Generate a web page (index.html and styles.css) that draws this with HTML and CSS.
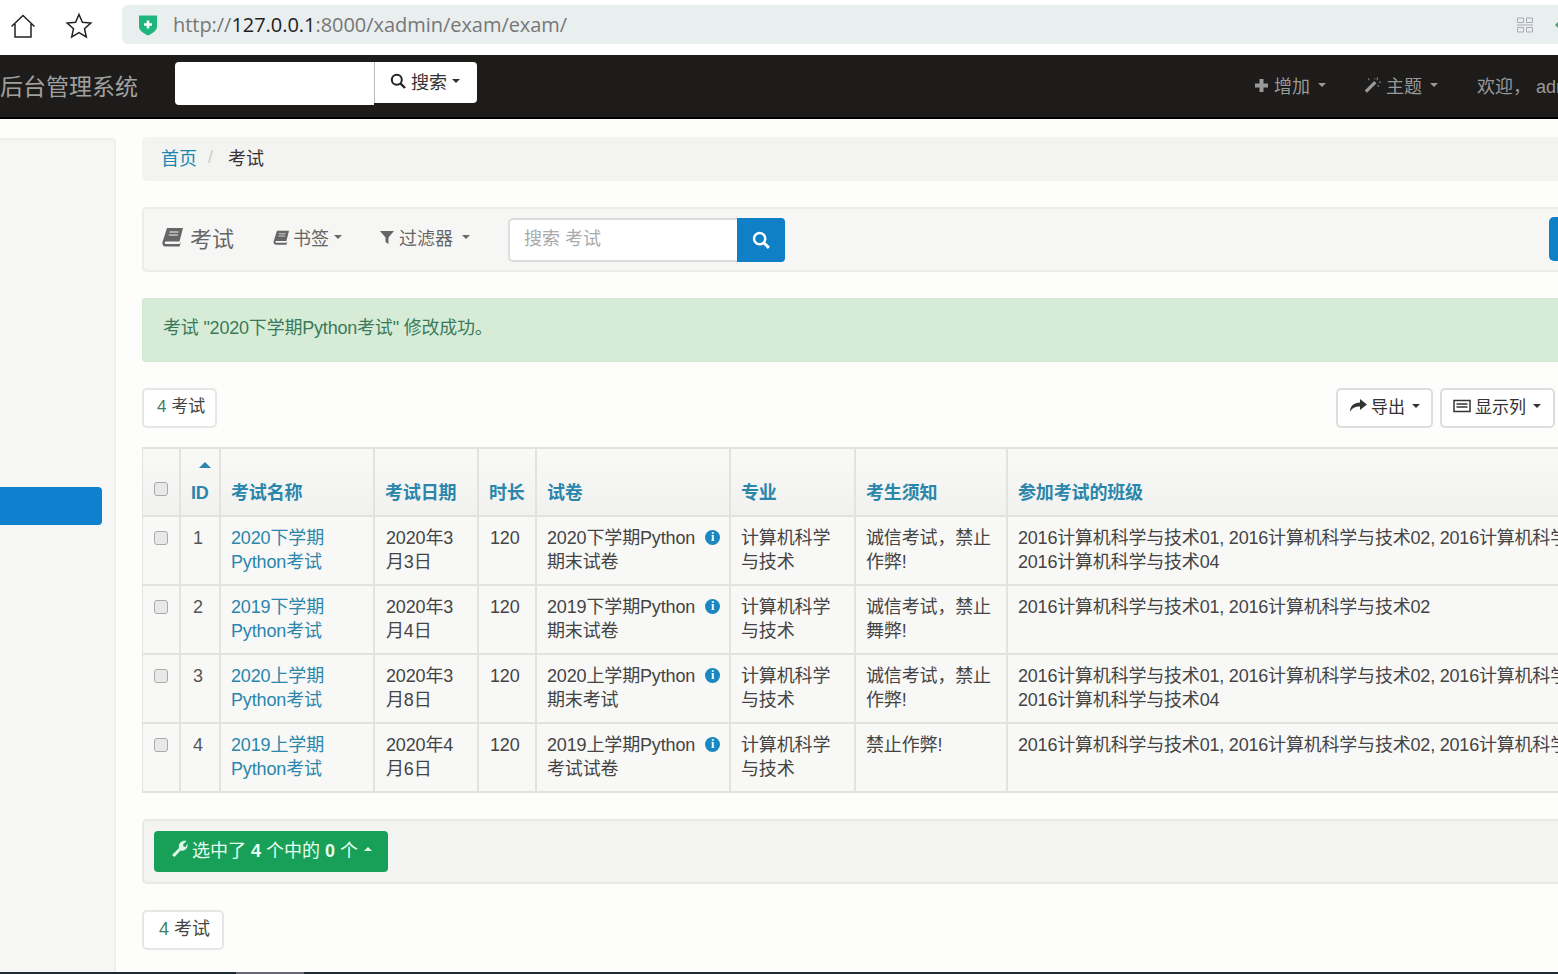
FILE: index.html
```html
<!DOCTYPE html>
<html lang="zh">
<head>
<meta charset="utf-8">
<title>考试</title>
<link rel="stylesheet" href="styles.css">
</head>
<body>
<div class="browser">
  <svg class="bicon" width="28" height="28" viewBox="0 0 28 28"><path d="M2.5 14.5 14 3.5l11.500 11M6 12v13h16V12" fill="none" stroke="#222" stroke-width="1.500"/></svg>
  <svg class="bicon star" width="28" height="28" viewBox="0 0 28 28"><path d="M14 2.500l3.400 7.800 8.400.8-6.300 5.600 1.800 8.300-7.300-4.300-7.300 4.300 1.800-8.300-6.300-5.600 8.400-.8z" fill="none" stroke="#222" stroke-width="1.500"/></svg>
  <div class="urlbar">
    <svg class="shield" width="20" height="24" viewBox="0 0 20 24"><path d="M1 2.500h18v11c0 4-4.500 7-9 9-4.500-2-9-5-9-9z" fill="#1fb57f"/><path d="M10 7.500v8M6 11.500h8" stroke="#fff" stroke-width="2.600"/></svg>
    <span class="url">http://<b>127.0.0.1</b>:8000/xadmin/exam/exam/</span>
    <svg class="qr" width="16" height="16" viewBox="0 0 16 16"><path d="M.5 1h6v4.500h-6zM9.500 1h6v4.500h-6zM.5 10.500h6V15h-6zM9.500 10.500h6V15h-6z" fill="none" stroke="#aab" stroke-width="1"/><path d="M0 8h16" stroke="#aab"/></svg>
    <svg class="edge" width="3" height="8" viewBox="0 0 3 8"><path d="M0 4 3 1v6z" fill="#5b9a80"/></svg>
  </div>
</div>
<header class="navbar">
  <span class="brand">后台管理系统</span>
  <div class="navsearch">
    <div class="navinput"></div>
    <button class="navbtn"><svg width="16" height="16" viewBox="0 0 16 16"><circle cx="6.800" cy="6.800" r="5" fill="none" stroke="#222" stroke-width="2"/><path d="M10.500 10.500 15 15" stroke="#222" stroke-width="2.400"/></svg><span class="navbtntext">搜索</span><i class="caret dark"></i></button>
  </div>
  <nav class="navright">
    <span class="navitem"><svg width="15" height="15" viewBox="0 0 15 15"><path d="M7.500 1v13M1 7.500h13" stroke="#999" stroke-width="4"/></svg>增加<i class="caret"></i></span>
    <span class="navitem"><svg width="17" height="18" viewBox="0 0 18 18"><path d="M2 16 12 6" stroke="#999" stroke-width="3.500"/><path d="M14 1v3M11 2l1 1M16 6h2M5 2v2M15 9v2" stroke="#999"/></svg>主题<i class="caret"></i></span>
    <span class="navitem welcome">欢迎， admin</span>
  </nav>
</header>
<div class="layout">
  <aside class="sidebar"><div class="sideactive"></div></aside>
  <main class="content">
    <div class="crumb"><a>首页</a><span class="sep">/</span><span>考试</span></div>
    <div class="toolbar">
      <span class="tooltitle"><svg width="22" height="20" viewBox="0 0 22 20"><path d="M5 1h16l-3.500 13.500H4C2.500 14.500 2.300 17 4 17h13.500l1.500-2-1.500 4.500H3.500C1 19.500 0 17.500.5 15z" fill="#666"/><path d="M7.500 5h9M6.800 8h9" stroke="#f6f6f5" stroke-width="1"/></svg>考试</span>
      <span class="toolitem"><svg width="17" height="15" viewBox="0 0 22 20"><path d="M5 1h16l-3.500 13.500H4C2.500 14.500 2.300 17 4 17h13.500l1.500-2-1.500 4.500H3.500C1 19.500 0 17.500.5 15z" fill="#666"/><path d="M7.500 5h9M6.800 8h9" stroke="#f6f6f5" stroke-width="1"/></svg>书签<i class="caret gray"></i></span>
      <span class="toolitem"><svg width="14" height="14" viewBox="0 0 14 14"><path d="M0 1h14L8.500 7.500V14l-3-2V7.500z" fill="#666"/></svg><span class="filtertext">过滤器</span><i class="caret gray wide"></i></span>
      <div class="searchbox"><span class="searchinput">搜索 考试</span><button class="searchbtn"><svg width="18" height="18" viewBox="0 0 16 16"><circle cx="6.800" cy="6.800" r="5" fill="none" stroke="#fff" stroke-width="2.200"/><path d="M10.500 10.500 15 15" stroke="#fff" stroke-width="2.600"/></svg></button></div>
      <span class="addbtn"></span>
    </div>
    <div class="alert">考试 "2020下学期Python考试" 修改成功。</div>
    <div class="countrow">
      <span class="count"><em>4</em> 考试</span>
      <div class="actions">
        <button class="tbtn"><svg width="18" height="14" viewBox="0 0 18 14"><path d="M11 0l7 5.500L11 11V7.500C6 7.500 3 9 1 13 1 7 5 3.500 11 3.500z" fill="#333"/></svg>导出<i class="caret dark"></i></button>
        <button class="tbtn"><svg width="18" height="14" viewBox="0 0 18 14"><path d="M1 1.500h16v11H1zM3.500 5h11M3.500 8h11" fill="none" stroke="#333" stroke-width="1.500"/></svg>显示列<i class="caret dark"></i></button>
      </div>
    </div>
    <div class="tablewrap">
    <table class="grid">
      <colgroup><col class="c1"><col class="c2"><col class="c3"><col class="c4"><col class="c5"><col class="c6"><col class="c7"><col class="c8"><col class="c9"></colgroup>
      <thead><tr>
        <th><span class="cb"></span></th>
        <th class="idh"><i class="sortup"></i><a>ID</a></th>
        <th><a>考试名称</a></th><th><a>考试日期</a></th><th><a>时长</a></th><th><a>试卷</a></th><th><a>专业</a></th><th><a>考生须知</a></th><th><a>参加考试的班级</a></th>
      </tr></thead>
      <tbody>
        <tr><td><span class="cb"></span></td><td class="idc">1</td><td><a>2020下学期Python考试</a></td><td class="num">2020年3月3日</td><td class="num">120</td><td class="paper"><span>2020下学期Python期末试卷</span><i class="info">i</i></td><td>计算机科学与技术</td><td>诚信考试，禁止作弊!</td><td class="cls"><div>2016计算机科学与技术01, 2016计算机科学与技术02, 2016计算机科学与技术03,</div><div>2016计算机科学与技术04</div></td></tr>
        <tr><td><span class="cb"></span></td><td class="idc">2</td><td><a>2019下学期Python考试</a></td><td class="num">2020年3月4日</td><td class="num">120</td><td class="paper"><span>2019下学期Python期末试卷</span><i class="info">i</i></td><td>计算机科学与技术</td><td>诚信考试，禁止舞弊!</td><td class="cls"><div>2016计算机科学与技术01, 2016计算机科学与技术02</div></td></tr>
        <tr><td><span class="cb"></span></td><td class="idc">3</td><td><a>2020上学期Python考试</a></td><td class="num">2020年3月8日</td><td class="num">120</td><td class="paper"><span>2020上学期Python期末考试</span><i class="info">i</i></td><td>计算机科学与技术</td><td>诚信考试，禁止作弊!</td><td class="cls"><div>2016计算机科学与技术01, 2016计算机科学与技术02, 2016计算机科学与技术03,</div><div>2016计算机科学与技术04</div></td></tr>
        <tr><td><span class="cb"></span></td><td class="idc">4</td><td><a>2019上学期Python考试</a></td><td class="num">2020年4月6日</td><td class="num">120</td><td class="paper"><span>2019上学期Python考试试卷</span><i class="info">i</i></td><td>计算机科学与技术</td><td>禁止作弊!</td><td class="cls"><div>2016计算机科学与技术01, 2016计算机科学与技术02, 2016计算机科学与技术03</div></td></tr>
      </tbody>
    </table>
    </div>
    <div class="actionbar"><button class="selbtn"><svg width="17" height="17" viewBox="0 0 17 17"><path d="M1 15l7-7C7 4 10.500 0 15.500 1L12 4.500l.5 2 2 .5L16.500 3.500c1 4.500-3 8-7 7L3.500 17z" fill="#dff5e8"/></svg><span>选中了 <b>4</b> 个中的 <b>0</b> 个</span><i class="caret up"></i></button></div>
    <span class="count bottom"><em>4</em> 考试</span>
  </main>
</div>
<div class="taskbar"><span class="thumb"></span></div>
</body>
</html>
```
FILE: styles.css
```css
* { box-sizing: border-box; }
html, body { margin: 0; height: 974px; overflow: hidden; }
body { width: 1558px; background: #fdfdfc; font-family: "Liberation Sans", "Noto Sans CJK SC", sans-serif; font-size: 18px; color: #444; display: flex; flex-direction: column; position: relative; }
button { font: inherit; }
a { color: #2a86ab; text-decoration: none; }
.browser { height: 55px; background: #fff; display: flex; align-items: flex-start; flex: none; padding: 5px 0 0 9px; }
.bicon { margin-top: 7px; flex: none; }
.star { margin-left: 28px; }
.urlbar { margin-left: 29px; flex: 1; height: 39px; background: #e9eeef; border-radius: 6px 0 0 6px; display: flex; align-items: center; padding-left: 16px; }
.shield { flex: none; }
.url { margin-left: 15px; font-family: "Open Sans", "Liberation Sans", sans-serif; font-size: 20px; color: #777; flex: 1; white-space: nowrap; letter-spacing: -0.04px; }
.url b { color: #222; font-weight: 400; }
.qr { margin-right: 22px; }
.edge { flex: none; }
.navbar { height: 64px; flex: none; background: #1d1c1b; border-bottom: 2px solid #000; display: flex; align-items: flex-start; color: #999; overflow: hidden; position: relative; }
.brand { font-size: 23px; margin-top: 13px; width: 175px; white-space: nowrap; color: #a0a0a0; }
.navsearch { display: flex; margin-top: 7px; height: 43px; }
.navinput { width: 199px; height: 43px; background: #fff; border-radius: 4px 0 0 4px; }
.navbtn { width: 103px; height: 41px; background: #fff; border: 0; border-left: 1px solid #bbb; border-radius: 0 4px 4px 0; color: #333; display: flex; align-items: center; justify-content: flex-start; padding: 0 0 3px 15px; }
.navbtntext { margin-left: 5px; }
.navright { margin-left: auto; display: flex; margin-top: 18px; white-space: nowrap; width: 304px; }
.navitem { display: inline-flex; align-items: center; gap: 5px; height: 24px; margin-right: 38px; }
.navitem:nth-child(2) { margin-right: 39px; }
.welcome { margin-right: -60px; white-space: pre; }
.caret { display: inline-block; width: 0; height: 0; border-left: 4.500px solid transparent; border-right: 4.500px solid transparent; border-top: 4.500px solid #999; margin-left: 5px; }
.navitem .caret { margin-left: 3px; }
.caret.dark { border-top-color: #333; }
.caret.gray { border-top-color: #666; margin-left: 2px; }
.caret.wide { margin-left: 6px; }
.caret.up { border-top: 0; border-bottom: 4px solid #eafff2; margin-left: 2px; }
.layout { flex: 1; display: flex; min-height: 0; padding-top: 18px; }
.sidebar { width: 116px; flex: none; background: #f6f6f5; border: 2px solid #eeeeec; border-left: 0; border-bottom: 0; border-radius: 0 4px 0 0; padding-top: 347px; margin-top: 1px; }
.sideactive { width: 102px; height: 38px; background: #0f7fd0; border-radius: 0 4px 4px 0; }
.content { margin-left: 26px; flex: 1; min-width: 0; overflow: hidden; }
.crumb { height: 44px; background: #f3f3f2; border-radius: 5px 0 0 5px; display: flex; align-items: center; padding: 0 0 4px 19px; font-size: 18px; color: #333; }
.crumb a { color: #1a87ae; }
.sep { color: #ccc; margin: 0 15px 0 11px; }
.toolbar { margin-top: 26px; height: 65px; background: #f6f6f5; border: 2px solid #ececea; border-right: 0; border-radius: 5px 0 0 5px; display: flex; align-items: center; padding-left: 18px; color: #666; position: relative; }
.tooltitle { display: inline-flex; align-items: center; gap: 6px; font-size: 22px; width: 111px; flex: none; padding-bottom: 5px; }
.toolitem { display: inline-flex; align-items: center; gap: 3px; flex: none; padding-bottom: 5px; }
.toolitem:nth-child(2) { width: 107px; }
.toolitem:nth-child(3) { width: 128px; }
.filtertext { margin-left: 2px; }
.searchbox { display: flex; height: 44px; }
.searchinput { width: 229px; height: 44px; border: 2px solid #ddd; border-right: 0; border-radius: 5px 0 0 5px; background: #fff; color: #aaa; padding-left: 14px; line-height: 38px; }
.searchbtn { width: 48px; height: 44px; background: #0f7fc6; border: 0; border-radius: 0 4px 4px 0; padding: 0; display: flex; align-items: center; justify-content: center; }
.addbtn { position: absolute; left: 1405px; top: 8px; width: 20px; height: 44px; background: #0f7fc6; border-radius: 5px 0 0 5px; }
.alert { margin-top: 26px; height: 64px; background: #d7ecd7; border: 1px solid #cfe6cf; border-right: 0; border-radius: 4px 0 0 4px; color: #3a7a5a; padding-left: 20px; line-height: 58px; white-space: nowrap; letter-spacing: -0.2px; }
.countrow { margin-top: 26px; display: flex; justify-content: space-between; height: 40px; padding-right: 3px; }
.count { display: inline-block; height: 40px; padding: 0 10px 0 13px; line-height: 33px; border: 2px solid #e6e6e4; border-radius: 5px; background: #fff; color: #444; font-size: 17px; }
.count em { font-style: normal; color: #3f7f60; }
.actions { display: flex; gap: 7px; }
.tbtn { height: 40px; width: 97px; background: #fff; border: 2px solid #ddd; border-radius: 5px; color: #333; display: inline-flex; align-items: center; justify-content: flex-start; gap: 4px; padding: 0 0 5px 11px; font-size: 17px; }
.tbtn + .tbtn { width: 115px; }
.tbtn .caret { margin-left: 3px; }
.tablewrap { margin: 19px 0 0 -1px; overflow: hidden; }
.grid { border-collapse: collapse; table-layout: fixed; width: 1600px; background: #f8f8f7; letter-spacing: -0.15px; }
.grid th, .grid td { border: 2px solid #e2e2e0; padding: 0 10px; line-height: 24px; vertical-align: top; text-align: left; }
.grid th { height: 68px; vertical-align: bottom; padding-bottom: 10px; font-size: 18px; background: linear-gradient(#f9f9f8, #f1f1f0); font-weight: 700; }
.grid td { height: 69px; padding-top: 9px; }
.grid td:first-child, .grid th:first-child { padding: 0; text-align: center; }
.grid td:first-child { padding-top: 14px; line-height: 14px; }
.grid th:first-child { padding-bottom: 18px; line-height: 14px; }
.c1 { width: 38px; } .c2 { width: 40px; } .c3 { width: 154px; } .c4 { width: 104px; } .c5 { width: 58px; } .c6 { width: 194px; } .c7 { width: 125px; } .c8 { width: 152px; } .c9 { width: 735px; }
.cb { display: inline-block; width: 14px; height: 14px; background: #e8e8e8; border: 1px solid #aaa; border-radius: 3px; }
.idh { position: relative; text-align: center; }
.sortup { position: absolute; left: 18px; top: 13px; border-left: 6px solid transparent; border-right: 6px solid transparent; border-bottom: 6px solid #2a86ab; }
.grid .idc { color: #555; padding-left: 12px; }
.grid .num { padding-left: 11px; }
.paper { position: relative; padding-right: 24px !important; }
.info { position: absolute; right: 9px; top: 13px; width: 15px; height: 15px; border-radius: 50%; background: #1a87c0; color: #fff; font: 700 12px/15px "Liberation Serif", serif; text-align: center; }
.cls { white-space: nowrap; overflow: hidden; letter-spacing: -0.2px; }
.actionbar { margin-top: 26px; height: 65px; background: #f3f3f2; border: 2px solid #e8e8e6; border-right: 0; border-radius: 5px 0 0 5px; padding: 10px; }
.selbtn { height: 41px; width: 234px; background: #18a058; color: #e6fff0; border: 0; border-radius: 4px; display: inline-flex; align-items: center; justify-content: flex-start; gap: 4px; padding: 0 0 6px 17px; white-space: nowrap; }
.bottom { margin-top: 26px; padding: 0 12px 0 15px; line-height: 34px; font-size: 18px; }
.taskbar { position: absolute; left: 0; right: 0; bottom: 0; height: 2px; background: #1c2a33; }
.thumb { display: block; margin-left: 236px; width: 68px; height: 2px; background: #667; }
```
